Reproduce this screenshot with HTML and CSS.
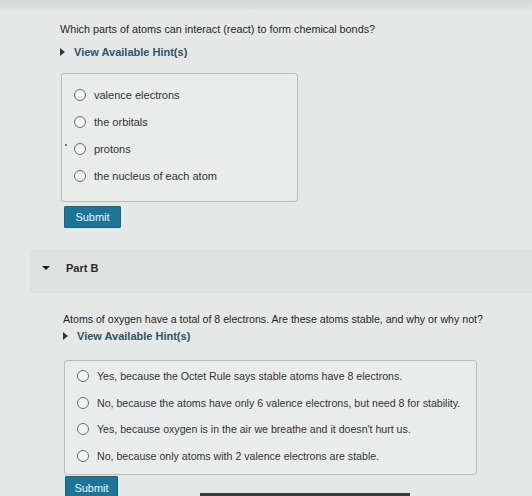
FILE: index.html
```html
<!DOCTYPE html>
<html>
<head>
<meta charset="utf-8">
<link rel="stylesheet" href="styles.css">
</head>
<body>
<div class="topbar"></div>
<section class="part part-a">
  <p class="question">Which parts of atoms can interact (react) to form chemical bonds?</p>
  <div class="hint"><span class="tri-right"></span><span class="hint-text">View Available Hint(s)</span></div>
  <div class="choices choices-a">
    <label class="choice"><span class="radio"></span><span>valence electrons</span></label>
    <label class="choice"><span class="radio"></span><span>the orbitals</span></label>
    <label class="choice"><span class="radio"></span><span>protons</span><span class="speck"></span></label>
    <label class="choice"><span class="radio"></span><span>the nucleus of each atom</span></label>
  </div>
  <button class="submit">Submit</button>
</section>
<div class="part-header">
  <span class="tri-down"></span><span class="part-title">Part B</span>
</div>
<section class="part part-b">
  <p class="question">Atoms of oxygen have a total of 8 electrons. Are these atoms stable, and why or why not?</p>
  <div class="hint"><span class="tri-right"></span><span class="hint-text">View Available Hint(s)</span></div>
  <div class="choices choices-b">
    <label class="choice"><span class="radio"></span><span>Yes, because the Octet Rule says stable atoms have 8 electrons.</span></label>
    <label class="choice"><span class="radio"></span><span>No, because the atoms have only 6 valence electrons, but need 8 for stability.</span></label>
    <label class="choice"><span class="radio"></span><span>Yes, because oxygen is in the air we breathe and it doesn't hurt us.</span></label>
    <label class="choice"><span class="radio"></span><span>No, because only atoms with 2 valence electrons are stable.</span></label>
  </div>
  <button class="submit">Submit</button>
</section>
<div class="bottom-bar"></div>
</body>
</html>
```
FILE: styles.css
```css
html, body {
  margin: 0;
  padding: 0;
}
body {
  width: 532px;
  height: 496px;
  overflow: hidden;
  background: #e6e8e7;
  font-family: "Liberation Sans", Arial, sans-serif;
  color: #2b2b2b;
  position: relative;
}
.topbar {
  height: 10px;
  background: linear-gradient(#d5d8d7, #e2e4e3);
}
.part-a {
  padding-left: 60px;
}
.question {
  margin: 0;
  font-size: 10.8px;
  line-height: 14px;
  color: #262626;
}
.part-a .question {
  padding-top: 12px;
}
.hint {
  display: flex;
  align-items: center;
  margin-top: 9px;
  height: 14px;
}
.tri-right {
  width: 0;
  height: 0;
  border-top: 4px solid transparent;
  border-bottom: 4px solid transparent;
  border-left: 5px solid #2a3a44;
  margin-right: 9px;
}
.hint-text {
  font-weight: bold;
  font-size: 11px;
  color: #2d5468;
}
.choices {
  border: 1px solid #b9bcbc;
  border-radius: 3px;
  background: #eaeceb;
  display: flex;
  flex-direction: column;
  box-sizing: border-box;
}
.choices-a {
  margin-top: 14px;
  margin-left: 1px;
  width: 237px;
  height: 129px;
  padding: 14px 0 0 12px;
  gap: 13px;
}
.choice {
  display: flex;
  align-items: center;
  font-size: 11px;
  height: 14px;
  color: #333;
  position: relative;
}
.choices-b .choice {
  font-size: 10.6px;
}
.radio {
  width: 10px;
  height: 10px;
  border: 1.4px solid #6b6f70;
  border-radius: 50%;
  background: #f2f3f3;
  margin-right: 8px;
  flex: none;
}
.speck {
  position: absolute;
  left: -9px;
  top: 2px;
  width: 2px;
  height: 2px;
  background: #777;
}
.submit {
  display: block;
  margin-top: 4px;
  margin-left: 4px;
  width: 57px;
  height: 22px;
  background: #1d7497;
  border: 1px solid #176585;
  border-radius: 1px;
  color: #eef4f7;
  font-family: "Liberation Sans", Arial, sans-serif;
  font-size: 11px;
  padding: 0;
}
.part-header {
  margin-top: 22px;
  margin-left: 30px;
  height: 43px;
  box-sizing: border-box;
  padding-top: 11px;
  background: #dfe1e0;
  display: flex;
  align-items: flex-start;
}
.tri-down {
  width: 0;
  height: 0;
  border-left: 4px solid transparent;
  border-right: 4px solid transparent;
  border-top: 4px solid #222;
  margin-top: 5px;
  margin-left: 12px;
  margin-right: 16px;
}
.part-title {
  font-weight: bold;
  font-size: 11px;
  line-height: 14px;
  color: #2b2b2b;
}
.part-b {
  padding-left: 63px;
}
.part-b .question {
  padding-top: 19px;
  font-size: 10.6px;
}
.part-b .hint {
  margin-top: 3px;
}
.choices-b {
  margin-top: 17px;
  margin-left: 1px;
  width: 413px;
  height: 115px;
  padding: 8px 0 0 12px;
  gap: 12.5px;
}
.part-b .submit {
  margin-top: 1px;
  margin-left: 2px;
  width: 53px;
  height: 24px;
}
.bottom-bar {
  position: absolute;
  left: 200px;
  bottom: 0;
  width: 210px;
  height: 3px;
  background: #3a3d3e;
}
```
